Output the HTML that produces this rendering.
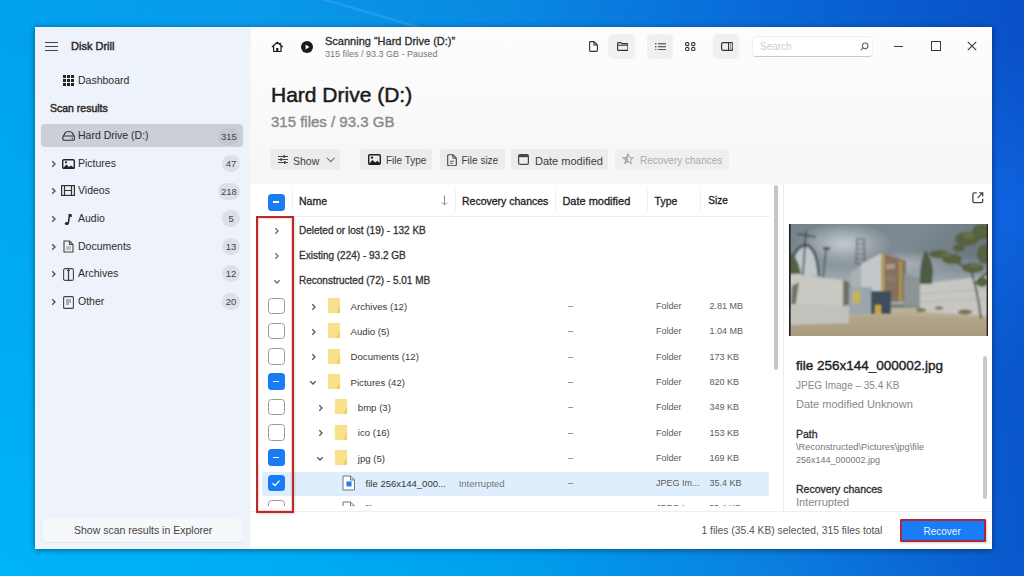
<!DOCTYPE html>
<html><head><meta charset="utf-8">
<style>
*{margin:0;padding:0;box-sizing:border-box}
html,body{width:1024px;height:576px;overflow:hidden}
body{position:relative;font-family:"Liberation Sans",sans-serif;background:linear-gradient(to right,#00a2ee 0%,#0a9aea 25%,#0a88e2 50%,#0a68d8 75%,#0a50c8 100%)}
#bg2{position:absolute;left:0;top:0;width:1024px;height:576px;background:linear-gradient(to right,#00b4f8 0%,#00aef5 25%,#00a0ee 50%,#0a80e0 75%,#0a58cc 100%);-webkit-mask-image:linear-gradient(to bottom,transparent,#000);mask-image:linear-gradient(to bottom,transparent,#000)}
.a{position:absolute;white-space:nowrap;line-height:1}
#win{position:absolute;left:35px;top:27px;width:957px;height:522px;background:#fafafa;overflow:hidden;box-shadow:0 1px 6px rgba(0,0,0,.45)}
#side{position:absolute;left:0;top:0;width:216px;height:522px;background:#eef2fa;border-right:1px solid #f5f7fb}
.s{color:#2b2b2b}
.badge{position:absolute;height:17.5px;border-radius:9px;background:#dde0e7;color:#444;font-size:9.5px;line-height:17.5px;text-align:center}
.chev{position:absolute;width:4.6px;height:4.6px;border-right:1.5px solid #555;border-bottom:1.5px solid #555;transform:rotate(-45deg)}
.chevd{position:absolute;width:5px;height:5px;border-right:1.4px solid #555;border-bottom:1.4px solid #555;transform:rotate(45deg)}
.btn{position:absolute;background:#ececec;border-radius:3px}
.cb{position:absolute;width:16.5px;height:16.5px;border:1px solid #9a9a9a;border-radius:3.5px;background:#fff}
.cbb{position:absolute;width:16.5px;height:16.5px;border-radius:3.5px;background:#1a7cf5}
.cbb:after{content:"";position:absolute;left:5px;top:7.3px;width:6px;height:1.3px;background:#fff}
.nm:after{display:none}
.fold{position:absolute;width:12px;height:15px;background:#f9e08a;border-radius:1px;box-shadow:0 0 1px rgba(230,190,80,.6)}
.fold:after{content:"";position:absolute;right:0;bottom:0;width:3px;height:7px;background:#ecc95e;clip-path:polygon(100% 0,100% 100%,0 100%)}
.r{color:#404040;font-size:9.5px}
.sb{-webkit-text-stroke:0.3px currentColor}
.g{color:#777;font-size:9px}
</style></head><body>
<div id="bg2"></div>
<div style="position:absolute;left:0;top:0;width:1024px;height:576px;background:radial-gradient(ellipse 70px 170px at 1010px 210px,rgba(20,110,240,.55),rgba(20,110,240,0))"></div>
<svg style="position:absolute;left:0;top:0" width="1024" height="40"><path d="M322 -1 L418 27" stroke="rgba(255,255,255,.1)" stroke-width="2.5"/></svg>
<div id="win">
  <div id="side">
    <!-- hamburger -->
    <div class="a" style="left:10px;top:15px;width:13px;height:1.3px;background:#444"></div>
    <div class="a" style="left:10px;top:19px;width:13px;height:1.3px;background:#444"></div>
    <div class="a" style="left:10px;top:23px;width:13px;height:1.3px;background:#444"></div>
    <div class="a s sb" style="left:36px;top:13.5px;font-size:11px;-webkit-text-stroke-width:0.45px">Disk Drill</div>
    <!-- dashboard icon -->
    <svg class="a" style="left:28px;top:48px" width="11" height="11" viewBox="0 0 11 11"><g fill="#222"><rect x="0" y="0" width="3" height="3"/><rect x="4" y="0" width="3" height="3"/><rect x="8" y="0" width="3" height="3"/><rect x="0" y="4" width="3" height="3"/><rect x="4" y="4" width="3" height="3"/><rect x="8" y="4" width="3" height="3"/><rect x="0" y="8" width="3" height="3"/><rect x="4" y="8" width="3" height="3"/><rect x="8" y="8" width="3" height="3"/></g></svg>
    <div class="a s" style="left:43px;top:48px;font-size:10.5px">Dashboard</div>
    <div class="a s sb" style="left:15px;top:76.3px;font-size:10.5px;-webkit-text-stroke-width:0.45px">Scan results</div>
    <!-- selected row -->
    <div class="a" style="left:6px;top:97px;width:202px;height:23px;background:#cbcfd7;border-radius:4px"></div>
    <svg class="a" style="left:26.5px;top:104.2px" width="13.5" height="10" viewBox="0 0 13.5 10"><path d="M1.2 5.2 L3.2 1.9 Q3.8 0.7 5 0.7 H8.5 Q9.7 0.7 10.3 1.9 L12.3 5.2" fill="none" stroke="#333" stroke-width="1.1"/><rect x="0.7" y="5" width="12.1" height="4.3" rx="2" fill="none" stroke="#333" stroke-width="1.1"/><circle cx="10.3" cy="7.15" r="0.75" fill="#333"/></svg>
    <div class="a s" style="left:43px;top:103px;font-size:10.5px">Hard Drive (D:)</div>
    <div class="badge" style="left:183.2px;top:100.7px;width:21.6px;background:#c2c6ce">315</div>
    <!-- categories -->
    <svg class="a" style="left:15.8px;top:132.7px" width="5" height="8" viewBox="0 0 5 8"><path d="M1.2 1.2 L4 4 L1.2 6.8" fill="none" stroke="#555" stroke-width="1.4"/></svg>
    <svg class="a" style="left:26.7px;top:131.8px" width="13" height="10.2" viewBox="0 0 13 10.2"><rect x="0.7" y="0.7" width="11.6" height="8.8" rx="1.3" fill="none" stroke="#222" stroke-width="1.4"/><path d="M0.8 9.4 L4.3 5.6 L7 8 L9 6.4 L12.2 9 V9.5 H0.8 Z" fill="#222"/><circle cx="4" cy="3.3" r="1.1" fill="#222"/></svg>
    <div class="a s" style="left:43px;top:131px;font-size:10.5px">Pictures</div>
    <div class="badge" style="left:187.4px;top:127.7px;width:17.4px">47</div>

    <svg class="a" style="left:15.8px;top:159.7px" width="5" height="8" viewBox="0 0 5 8"><path d="M1.2 1.2 L4 4 L1.2 6.8" fill="none" stroke="#555" stroke-width="1.4"/></svg>
    <svg class="a" style="left:26px;top:158px" width="14" height="11" viewBox="0 0 14 11"><rect x="0.6" y="0.6" width="12.8" height="9.8" fill="none" stroke="#333" stroke-width="1.2"/><path d="M3.5 0.6 V10.4 M10.5 0.6 V10.4 M3.5 5.5 H10.5" stroke="#333" stroke-width="1.2"/></svg>
    <div class="a s" style="left:43px;top:158px;font-size:10.5px">Videos</div>
    <div class="badge" style="left:183.2px;top:155.7px;width:21.6px">218</div>

    <svg class="a" style="left:15.8px;top:187.7px" width="5" height="8" viewBox="0 0 5 8"><path d="M1.2 1.2 L4 4 L1.2 6.8" fill="none" stroke="#555" stroke-width="1.4"/></svg>
    <svg class="a" style="left:29px;top:187px" width="8" height="12" viewBox="0 0 8 12"><path d="M4.5 1 Q6 0.5 7 1 L7 2.2 Q6 2 5.3 2.2 L4.3 9.5" fill="none" stroke="#222" stroke-width="1.5"/><ellipse cx="2.8" cy="9.5" rx="2" ry="1.6" fill="#222"/></svg>
    <div class="a s" style="left:43px;top:186px;font-size:10.5px">Audio</div>
    <div class="badge" style="left:187.4px;top:182.7px;width:17.4px">5</div>

    <svg class="a" style="left:15.8px;top:215.7px" width="5" height="8" viewBox="0 0 5 8"><path d="M1.2 1.2 L4 4 L1.2 6.8" fill="none" stroke="#555" stroke-width="1.4"/></svg>
    <svg class="a" style="left:28px;top:213px" width="11" height="13" viewBox="0 0 11 13"><path d="M1 1 H6.5 L10 4.5 V12 H1 Z M6.5 1 V4.5 H10" fill="none" stroke="#444" stroke-width="1.1"/><path d="M3 7 H8 M3 9 H8" stroke="#777" stroke-width="0.8"/></svg>
    <div class="a s" style="left:43px;top:214px;font-size:10.5px">Documents</div>
    <div class="badge" style="left:187.4px;top:210.7px;width:17.4px">13</div>

    <svg class="a" style="left:15.8px;top:242.7px" width="5" height="8" viewBox="0 0 5 8"><path d="M1.2 1.2 L4 4 L1.2 6.8" fill="none" stroke="#555" stroke-width="1.4"/></svg>
    <svg class="a" style="left:28px;top:241px" width="11" height="13" viewBox="0 0 11 13"><rect x="0.6" y="0.6" width="9.8" height="11.8" rx="1.5" fill="none" stroke="#444" stroke-width="1.1"/><path d="M5.5 1 V12" stroke="#444" stroke-width="1.3"/><path d="M4 3 L5.5 1.5 L7 3" fill="none" stroke="#444" stroke-width="1"/></svg>
    <div class="a s" style="left:43px;top:241px;font-size:10.5px">Archives</div>
    <div class="badge" style="left:187.4px;top:237.7px;width:17.4px">12</div>

    <svg class="a" style="left:15.8px;top:270.7px" width="5" height="8" viewBox="0 0 5 8"><path d="M1.2 1.2 L4 4 L1.2 6.8" fill="none" stroke="#555" stroke-width="1.4"/></svg>
    <svg class="a" style="left:28px;top:269px" width="11" height="13" viewBox="0 0 11 13"><rect x="0.6" y="0.6" width="9.8" height="11.8" rx="1" fill="none" stroke="#444" stroke-width="1.1"/><path d="M3 4 H8 M3 6 H8 M3 8 H6" stroke="#555" stroke-width="0.9"/></svg>
    <div class="a s" style="left:43px;top:269px;font-size:10.5px">Other</div>
    <div class="badge" style="left:187.4px;top:265.7px;width:17.4px">20</div>

    <!-- bottom button -->
    <div class="a" style="left:8px;top:492px;width:199px;height:23px;background:#f6f8fb;border-radius:4px;box-shadow:0 1px 1px rgba(0,0,0,.06)"></div>
    <div class="a" style="left:39px;top:498px;font-size:10.5px;color:#444">Show scan results in Explorer</div>
  </div>
  <!-- MAIN -->
  </div>

<div id="mainwrap">
  <!-- top bg -->
  <div class="a" style="left:251px;top:27px;width:741px;height:156.5px;background:linear-gradient(to bottom,#fdfdfd,#f9f9f9 60%,#f6f6f6)"></div>
  <!-- table bg -->
  <div class="a" style="left:251px;top:183.5px;width:532px;height:327.5px;background:#fff"></div>
  <!-- preview bg -->
  <div class="a" style="left:783px;top:183.5px;width:209px;height:327.5px;background:#fff;border-left:1px solid #ececec"></div>
  <!-- footer -->
  <div class="a" style="left:251px;top:511px;width:741px;height:38px;background:#fff;border-top:1px solid #efefef"></div>

  <!-- home icon -->
  <svg class="a" style="left:271px;top:41px" width="13" height="12" viewBox="0 0 13 12"><path d="M0.9 6 L6.3 1.2 L11.7 6 M2.6 4.6 V10.5 H10 V4.6 M9.3 3.6 V1.8" fill="none" stroke="#1a1a1a" stroke-width="1.2" stroke-linejoin="round"/><rect x="5.2" y="7" width="2.2" height="3.5" fill="#1a1a1a"/></svg>
  <!-- play icon -->
  <svg class="a" style="left:301px;top:41px" width="12" height="12" viewBox="0 0 12 12"><circle cx="6" cy="6" r="6" fill="#1a1a1a"/><path d="M4.6 3.6 L8.4 6 L4.6 8.4 Z" fill="#fff"/></svg>
  <div class="a" style="left:325px;top:36px;font-size:11px;color:#2b2b2b;-webkit-text-stroke:0.3px #2b2b2b">Scanning “Hard Drive (D:)”</div>
  <div class="a" style="left:325px;top:50.3px;font-size:9px;color:#777">315 files / 93.3 GB - Paused</div>

  <!-- toolbar icons -->
  <svg class="a" style="left:589px;top:41px" width="9" height="11" viewBox="0 0 9 11"><path d="M0.6 1.4 Q0.6 0.6 1.4 0.6 H5 L8.4 4 V9.6 Q8.4 10.4 7.6 10.4 H1.4 Q0.6 10.4 0.6 9.6 Z M5 0.6 V4 H8.4" fill="none" stroke="#333" stroke-width="1.1" stroke-linejoin="round"/></svg>
  <div class="btn" style="left:608px;top:34px;width:27px;height:25px;background:#f0f0f0;border-radius:5px"></div>
  <svg class="a" style="left:616.5px;top:42px" width="11.5" height="9" viewBox="0 0 11.5 9"><path d="M0.6 1.3 Q0.6 0.6 1.3 0.6 H4 L5 1.6 H10.2 Q10.9 1.6 10.9 2.3 V7.7 Q10.9 8.4 10.2 8.4 H1.3 Q0.6 8.4 0.6 7.7 Z M0.6 3.2 H10.9" fill="none" stroke="#333" stroke-width="1.1" stroke-linejoin="round"/></svg>
  <div class="btn" style="left:647px;top:34px;width:26px;height:25px;background:#f0f0f0;border-radius:5px"></div>
  <svg class="a" style="left:654.5px;top:42.5px" width="11" height="7.5" viewBox="0 0 11 7.5"><g fill="#333"><circle cx="0.8" cy="0.8" r="0.75"/><circle cx="0.8" cy="3.75" r="0.75"/><circle cx="0.8" cy="6.7" r="0.75"/><rect x="3" y="0.3" width="8" height="1"/><rect x="3" y="3.25" width="8" height="1"/><rect x="3" y="6.2" width="8" height="1"/></g></svg>
  <svg class="a" style="left:684.5px;top:42px" width="11" height="9" viewBox="0 0 11 9"><g fill="none" stroke="#333" stroke-width="1.05"><rect x="0.6" y="0.6" width="3.3" height="3" rx="1"/><rect x="6.6" y="0.6" width="3.3" height="3" rx="1"/><rect x="0.6" y="5.4" width="3.3" height="3" rx="1"/><rect x="6.6" y="5.4" width="3.3" height="3" rx="1"/></g></svg>
  <div class="btn" style="left:713px;top:34px;width:26px;height:25px;background:#f0f0f0;border-radius:5px"></div>
  <svg class="a" style="left:720.5px;top:41.8px" width="12.5" height="9" viewBox="0 0 12.5 9"><rect x="0.6" y="0.6" width="11.3" height="7.8" rx="1.6" fill="none" stroke="#333" stroke-width="1.2"/><rect x="7" y="1" width="1.1" height="7" fill="#333"/><rect x="9.2" y="2.2" width="1.2" height="1.6" fill="#555"/><rect x="9.2" y="4.6" width="1.2" height="2.4" fill="#777"/></svg>
  <!-- search -->
  <div class="a" style="left:752px;top:36px;width:121px;height:21px;background:#fff;border-radius:4px;border:1px solid #f1f1f1;border-bottom:1px solid #c9c9c9"></div>
  <div class="a" style="left:760px;top:42px;font-size:10px;color:#cdcdcd">Search</div>
  <svg class="a" style="left:860px;top:42px" width="9" height="9" viewBox="0 0 9 9"><circle cx="5.2" cy="3.8" r="2.8" fill="none" stroke="#666" stroke-width="1.1"/><path d="M3.2 5.8 L0.8 8.2" stroke="#666" stroke-width="1.2"/></svg>
  <!-- window controls -->
  <div class="a" style="left:894.3px;top:46px;width:8.5px;height:1.1px;background:#3a3a3a"></div>
  <div class="a" style="left:931px;top:41.3px;width:9.5px;height:9.5px;border:1.1px solid #3a3a3a"></div>
  <svg class="a" style="left:967px;top:41px" width="10" height="10" viewBox="0 0 10 10"><path d="M0.8 0.8 L9.2 9.2 M9.2 0.8 L0.8 9.2" stroke="#3a3a3a" stroke-width="1.1"/></svg>

  <!-- title -->
  <div class="a" style="left:271px;top:83.5px;font-size:21px;color:#1b1b1b;-webkit-text-stroke:0.5px #1b1b1b">Hard Drive (D:)</div>
  <div class="a" style="left:271px;top:114.3px;font-size:15px;color:#8a8a8a;-webkit-text-stroke:0.4px #8a8a8a">315 files / 93.3 GB</div>

  <!-- filter buttons -->
  <div class="btn" style="left:270px;top:149px;width:70px;height:21px"></div>
  <svg class="a" style="left:278px;top:155px" width="10" height="9" viewBox="0 0 10 9"><g stroke="#444" stroke-width="1"><path d="M0 1.5 H10 M0 4.5 H10 M0 7.5 H10"/></g><g fill="#444"><rect x="5.5" y="0" width="1.4" height="3"/><rect x="2.5" y="3" width="1.4" height="3"/><rect x="6" y="6" width="1.4" height="3"/></g></svg>
  <div class="a" style="left:293px;top:155.5px;font-size:10.5px;color:#3c3c3c">Show</div>
  <div class="chevd" style="left:328px;top:155px;width:5.5px;height:5.5px"></div>
  <div class="btn" style="left:360px;top:149px;width:72px;height:21px"></div>
  <svg class="a" style="left:368px;top:154px" width="13" height="11" viewBox="0 0 13 11"><rect x="0.7" y="0.7" width="11.6" height="9.6" rx="1.2" fill="none" stroke="#1e1e1e" stroke-width="1.4"/><path d="M0.8 10.3 L4.5 6 L7.3 8.6 L9.3 6.8 L12.2 9.6 V10.3 Z" fill="#1e1e1e"/><circle cx="4" cy="3.6" r="1.2" fill="#1e1e1e"/></svg>
  <div class="a" style="left:386px;top:155.5px;font-size:10px;color:#3c3c3c">File Type</div>
  <div class="btn" style="left:440px;top:149px;width:65px;height:21px"></div>
  <svg class="a" style="left:447px;top:153.5px" width="10" height="12.5" viewBox="0 0 10 12.5"><path d="M1.8 0.7 H6 L9.3 4 V10.6 Q9.3 11.8 8.1 11.8 H1.8 Q0.7 11.8 0.7 10.6 V1.9 Q0.7 0.7 1.8 0.7 Z M5.8 0.8 V3 Q5.8 4.2 7 4.2 H9.2" fill="none" stroke="#444" stroke-width="1.1"/><path d="M3 7.2 H7 M3 9.2 H6" stroke="#555" stroke-width="0.9"/></svg>
  <div class="a" style="left:461.5px;top:155.5px;font-size:10px;color:#3c3c3c">File size</div>
  <div class="btn" style="left:511px;top:149px;width:97px;height:21px"></div>
  <svg class="a" style="left:518px;top:154px" width="11" height="11" viewBox="0 0 11 11"><rect x="0.6" y="0.6" width="9.8" height="9.8" rx="1.5" fill="none" stroke="#444" stroke-width="1.2"/><rect x="1" y="1" width="9" height="2.2" fill="#444"/></svg>
  <div class="a" style="left:535px;top:155.5px;font-size:11px;color:#3c3c3c">Date modified</div>
  <div class="btn" style="left:615px;top:149px;width:114px;height:21px;background:#efefef"></div>
  <svg class="a" style="left:622px;top:153px" width="12" height="12" viewBox="0 0 12 12"><path d="M6 0.8 L7.5 4.3 L11.2 4.5 L8.3 6.9 L9.3 10.6 L6 8.5 L2.7 10.6 L3.7 6.9 L0.8 4.5 L4.5 4.3 Z" fill="none" stroke="#aaa" stroke-width="1.1" stroke-linejoin="round"/><path d="M6 0.8 L6 8.5 L2.7 10.6 L3.7 6.9 L0.8 4.5 L4.5 4.3 Z" fill="#aaa"/></svg>
  <div class="a" style="left:640px;top:155.5px;font-size:10px;color:#aaa">Recovery chances</div>
</div>
<div class="cbb" style="left:268px;top:194px"></div>
<div class="a" style="left:291.5px;top:189px;width:1px;height:23px;background:#f2f2f2"></div>
<div class="a" style="left:454.5px;top:189px;width:1px;height:23px;background:#f2f2f2"></div>
<div class="a" style="left:554.5px;top:189px;width:1px;height:23px;background:#f2f2f2"></div>
<div class="a" style="left:646.5px;top:189px;width:1px;height:23px;background:#f2f2f2"></div>
<div class="a" style="left:699.5px;top:189px;width:1px;height:23px;background:#f2f2f2"></div>
<div class="a" style="left:262px;top:216px;width:508px;height:1px;background:#ededed"></div>
<div class="a" style="left:299px;top:195.87px;font-size:10.5px;color:#222;-webkit-text-stroke:0.3px currentColor;">Name</div>
<svg class="a" style="left:441px;top:195px" width="7" height="11" viewBox="0 0 7 11"><path d="M3.5 0.5 V10 M0.8 7.3 L3.5 10 L6.2 7.3" fill="none" stroke="#888" stroke-width="1"/></svg>
<div class="a" style="left:462px;top:195.87px;font-size:10.5px;color:#222;-webkit-text-stroke:0.3px currentColor;">Recovery chances</div>
<div class="a" style="left:562.4px;top:195.63px;font-size:11px;color:#222;-webkit-text-stroke:0.3px currentColor;">Date modified</div>
<div class="a" style="left:654.6px;top:195.87px;font-size:10.5px;color:#222;-webkit-text-stroke:0.3px currentColor;">Type</div>
<div class="a" style="left:708.3px;top:196.12px;font-size:10px;color:#222;-webkit-text-stroke:0.3px currentColor;">Size</div>
<div class="a" style="left:262px;top:471.6px;width:507px;height:24px;background:#dfeefc;border-radius:3px"></div>
<svg class="a" style="left:274.2px;top:226.6px" width="5" height="8" viewBox="0 0 5 8"><path d="M1.3 1.3 L4 4 L1.3 6.7" fill="none" stroke="#6a6a6a" stroke-width="1.3"/></svg>
<div class="a" style="left:299px;top:225.72px;font-size:10px;color:#333;-webkit-text-stroke:0.3px currentColor;">Deleted or lost (19) - 132 KB</div>
<svg class="a" style="left:274.2px;top:251.9px" width="5" height="8" viewBox="0 0 5 8"><path d="M1.3 1.3 L4 4 L1.3 6.7" fill="none" stroke="#6a6a6a" stroke-width="1.3"/></svg>
<div class="a" style="left:299px;top:251.02px;font-size:10px;color:#333;-webkit-text-stroke:0.3px currentColor;">Existing (224) - 93.2 GB</div>
<svg class="a" style="left:272.5px;top:278.7px" width="8" height="5" viewBox="0 0 8 5"><path d="M1.3 1.3 L4 4 L6.7 1.3" fill="none" stroke="#6a6a6a" stroke-width="1.3"/></svg>
<div class="a" style="left:299px;top:276.31px;font-size:10px;color:#333;-webkit-text-stroke:0.3px currentColor;">Reconstructed (72) - 5.01 MB</div>
<div class="cb" style="left:268px;top:297.5px"></div>
<svg class="a" style="left:310.5px;top:302.5px" width="5" height="8" viewBox="0 0 5 8"><path d="M1.3 1.3 L4 4 L1.3 6.7" fill="none" stroke="#555" stroke-width="1.3"/></svg>
<div class="fold" style="left:327.5px;top:298.0px"></div>
<div class="a" style="left:350.6px;top:301.81px;font-size:9.6px;color:#383838;">Archives (12)</div>
<div class="a" style="left:568px;top:302.10px;font-size:9px;color:#666;">–</div>
<div class="a" style="left:656px;top:302.10px;font-size:9px;color:#5c5c5c;">Folder</div>
<div class="a" style="left:709.5px;top:302.10px;font-size:9px;color:#5c5c5c;">2.81 MB</div>
<div class="cb" style="left:268px;top:322.8px"></div>
<svg class="a" style="left:310.5px;top:327.8px" width="5" height="8" viewBox="0 0 5 8"><path d="M1.3 1.3 L4 4 L1.3 6.7" fill="none" stroke="#555" stroke-width="1.3"/></svg>
<div class="fold" style="left:327.5px;top:323.3px"></div>
<div class="a" style="left:350.6px;top:327.11px;font-size:9.6px;color:#383838;">Audio (5)</div>
<div class="a" style="left:568px;top:327.40px;font-size:9px;color:#666;">–</div>
<div class="a" style="left:656px;top:327.40px;font-size:9px;color:#5c5c5c;">Folder</div>
<div class="a" style="left:709.5px;top:327.40px;font-size:9px;color:#5c5c5c;">1.04 MB</div>
<div class="cb" style="left:268px;top:348.1px"></div>
<svg class="a" style="left:310.5px;top:353.1px" width="5" height="8" viewBox="0 0 5 8"><path d="M1.3 1.3 L4 4 L1.3 6.7" fill="none" stroke="#555" stroke-width="1.3"/></svg>
<div class="fold" style="left:327.5px;top:348.6px"></div>
<div class="a" style="left:350.6px;top:352.41px;font-size:9.6px;color:#383838;">Documents (12)</div>
<div class="a" style="left:568px;top:352.70px;font-size:9px;color:#666;">–</div>
<div class="a" style="left:656px;top:352.70px;font-size:9px;color:#5c5c5c;">Folder</div>
<div class="a" style="left:709.5px;top:352.70px;font-size:9px;color:#5c5c5c;">173 KB</div>
<div class="cbb" style="left:268px;top:373.4px"></div>
<svg class="a" style="left:309.0px;top:379.9px" width="8" height="5" viewBox="0 0 8 5"><path d="M1.3 1.3 L4 4 L6.7 1.3" fill="none" stroke="#555" stroke-width="1.3"/></svg>
<div class="fold" style="left:327.5px;top:373.9px"></div>
<div class="a" style="left:350.6px;top:377.71px;font-size:9.6px;color:#383838;">Pictures (42)</div>
<div class="a" style="left:568px;top:378.00px;font-size:9px;color:#666;">–</div>
<div class="a" style="left:656px;top:378.00px;font-size:9px;color:#5c5c5c;">Folder</div>
<div class="a" style="left:709.5px;top:378.00px;font-size:9px;color:#5c5c5c;">820 KB</div>
<div class="cb" style="left:268px;top:398.7px"></div>
<svg class="a" style="left:317.7px;top:403.7px" width="5" height="8" viewBox="0 0 5 8"><path d="M1.3 1.3 L4 4 L1.3 6.7" fill="none" stroke="#555" stroke-width="1.3"/></svg>
<div class="fold" style="left:334.7px;top:399.2px"></div>
<div class="a" style="left:357.8px;top:403.01px;font-size:9.6px;color:#383838;">bmp (3)</div>
<div class="a" style="left:568px;top:403.30px;font-size:9px;color:#666;">–</div>
<div class="a" style="left:656px;top:403.30px;font-size:9px;color:#5c5c5c;">Folder</div>
<div class="a" style="left:709.5px;top:403.30px;font-size:9px;color:#5c5c5c;">349 KB</div>
<div class="cb" style="left:268px;top:424.0px"></div>
<svg class="a" style="left:317.7px;top:429.0px" width="5" height="8" viewBox="0 0 5 8"><path d="M1.3 1.3 L4 4 L1.3 6.7" fill="none" stroke="#555" stroke-width="1.3"/></svg>
<div class="fold" style="left:334.7px;top:424.5px"></div>
<div class="a" style="left:357.8px;top:428.31px;font-size:9.6px;color:#383838;">ico (16)</div>
<div class="a" style="left:568px;top:428.60px;font-size:9px;color:#666;">–</div>
<div class="a" style="left:656px;top:428.60px;font-size:9px;color:#5c5c5c;">Folder</div>
<div class="a" style="left:709.5px;top:428.60px;font-size:9px;color:#5c5c5c;">153 KB</div>
<div class="cbb" style="left:268px;top:449.3px"></div>
<svg class="a" style="left:316.2px;top:455.8px" width="8" height="5" viewBox="0 0 8 5"><path d="M1.3 1.3 L4 4 L6.7 1.3" fill="none" stroke="#555" stroke-width="1.3"/></svg>
<div class="fold" style="left:334.7px;top:449.8px"></div>
<div class="a" style="left:357.8px;top:453.61px;font-size:9.6px;color:#383838;">jpg (5)</div>
<div class="a" style="left:568px;top:453.90px;font-size:9px;color:#666;">–</div>
<div class="a" style="left:656px;top:453.90px;font-size:9px;color:#5c5c5c;">Folder</div>
<div class="a" style="left:709.5px;top:453.90px;font-size:9px;color:#5c5c5c;">169 KB</div>
<div class="cbb nm" style="left:268px;top:474.6px"><svg width="16" height="16" viewBox="0 0 16 16" style="position:absolute;left:0;top:0"><path d="M4.5 8.3 L7 10.6 L11.5 5.6" fill="none" stroke="#fff" stroke-width="1.3"/></svg></div>
<svg class="a" style="left:342px;top:474.8px" width="14" height="16" viewBox="0 0 14 16"><path d="M1 1 H8.5 L12.5 5 V15 H1 Z M8.5 1 V5 H12.5" fill="#fff" stroke="#777" stroke-width="1"/><rect x="4.4" y="6.3" width="5.2" height="5.2" rx="1.3" fill="#2a7fe0" stroke="#8cc0f0" stroke-width="0.6"/></svg>
<div class="a" style="left:365.6px;top:478.96px;font-size:9.5px;color:#333;">file 256x144_000...</div>
<div class="a" style="left:458.7px;top:479.36px;font-size:9.5px;color:#777;">Interrupted</div>
<div class="a" style="left:568px;top:479.20px;font-size:9px;color:#666;">–</div>
<div class="a" style="left:656px;top:479.20px;font-size:9px;color:#5c5c5c;">JPEG Im...</div>
<div class="a" style="left:709.5px;top:479.20px;font-size:9px;color:#5c5c5c;">35.4 KB</div>
<div class="a" style="left:252px;top:496.9px;width:531px;height:9.1px;overflow:hidden"><div class="cb" style="left:16px;top:3px"></div><svg class="a" style="left:90px;top:4px" width="14" height="16" viewBox="0 0 14 16"><path d="M1 1 H8.5 L12.5 5 V15 H1 Z M8.5 1 V5 H12.5" fill="#fff" stroke="#777" stroke-width="1"/></svg><div class="a" style="left:113px;top:7px;font-size:9.5px;color:#444">file</div><div class="a" style="left:404px;top:7px;font-size:9px;color:#666">JPEG Im...</div><div class="a" style="left:457px;top:7px;font-size:9px;color:#666">35.4 KB</div></div>
<div class="a" style="left:773.5px;top:185px;width:4.5px;height:185px;background:#c6c6c6;border-radius:2px"></div>
<div class="a" style="left:256.3px;top:215.7px;width:37.5px;height:297.1px;border:2px solid #bb2a2a;box-shadow:inset 0 0 1px 1px rgba(255,120,120,.35), 1px 1px 2px rgba(0,0,0,.15)"></div>
<svg class="a" style="left:971.5px;top:192px" width="12" height="11.5" viewBox="0 0 12 11.5"><path d="M4.8 0.9 H2.3 Q0.9 0.9 0.9 2.3 V9.2 Q0.9 10.6 2.3 10.6 H9.3 Q10.7 10.6 10.7 9.2 V6.8 M5.6 5.9 L10.6 0.9 M7.2 0.9 H10.7 V4.4" fill="none" stroke="#444" stroke-width="1.3"/></svg>
<svg class="a" style="left:788.5px;top:223.7px" width="199" height="112" viewBox="0 0 199 112">
<defs>
<linearGradient id="sky" x1="0" y1="0" x2="1" y2="0.6"><stop offset="0" stop-color="#76838a"/><stop offset="0.5" stop-color="#7e8a92"/><stop offset="1" stop-color="#5f6b72"/></linearGradient>
<linearGradient id="gnd" x1="0" y1="0" x2="0" y2="1"><stop offset="0" stop-color="#bfb39a"/><stop offset="1" stop-color="#a3967a"/></linearGradient>
<radialGradient id="glow" cx="0.5" cy="0.5" r="0.5"><stop offset="0" stop-color="#d2d9dc" stop-opacity=".85"/><stop offset="1" stop-color="#d2d9dc" stop-opacity="0"/></radialGradient>
<linearGradient id="hz" x1="0" y1="0" x2="0" y2="1"><stop offset="0" stop-color="#a8b3b8" stop-opacity="0"/><stop offset="1" stop-color="#a8b3b8" stop-opacity=".9"/></linearGradient>
<filter id="bl" x="-5%" y="-5%" width="110%" height="110%"><feGaussianBlur stdDeviation="0.8"/></filter>
<clipPath id="cp"><rect width="199" height="112"/></clipPath>
</defs>
<g clip-path="url(#cp)"><g filter="url(#bl)">
<rect x="-3" y="-3" width="205" height="118" fill="url(#sky)"/>
<ellipse cx="55" cy="20" rx="48" ry="22" fill="url(#glow)"/>
<ellipse cx="120" cy="40" rx="40" ry="14" fill="url(#glow)" opacity=".6"/>
<rect x="-3" y="30" width="205" height="30" fill="url(#hz)"/>
<path d="M-3 86 L199 82 V115 H-3 Z" fill="url(#gnd)"/>
<path d="M-3 98 Q80 88 199 96 V115 H-3 Z" fill="#ad9f82" opacity=".5"/>
<!-- left arch building -->
<path d="M1 52 Q3 22 17 21 Q28 23 30 52 Z" fill="#bfc7ca"/>
<path d="M1 52 Q3 22 17 21 Q28 23 30 52" fill="none" stroke="#4c575c" stroke-width="2.8"/>
<path d="M-1 28 Q8 30 12 50 H-1 Z" fill="#56613f"/>
<path d="M17 7 L13 62" stroke="#3c3c3c" stroke-width="1.5"/>
<path d="M8 10 L27 13" stroke="#474747" stroke-width="1.3"/>
<path d="M37 26 L31 82" stroke="#3c3c3c" stroke-width="1.3"/>
<rect x="34" y="23" width="7" height="3" fill="#555"/>
<!-- left wall -->
<path d="M1 50 L54 56 V82 L1 84 Z" fill="#c9c8c3"/>
<path d="M3 62 L10 58 L5 92 L1 92 Z" fill="#5b5e4c" opacity=".8"/>
<path d="M1 80 L60 81 V99 L1 101 Z" fill="#c2c1bb"/>
<path d="M54 56 L60 58 V81 L54 82 Z" fill="#6e7266"/>
<!-- tower -->
<path d="M68 15 H75 L76 40 H67 Z" fill="none" stroke="#5e6266" stroke-width="1.2"/>
<path d="M68 20 H75 M67.5 25 H75.5 M67.5 30 H75.5 M67 35 H76" stroke="#5e6266" stroke-width="0.9"/>
<!-- center building -->
<path d="M62 48 L90 30 L117 38 V80 H62 Z" fill="#a9b1b5"/>
<path d="M72 40 L93 29 V70 H72 Z" fill="#c2c8ca"/>
<path d="M93 29 L117 37 V78 H93 Z" fill="#86705e"/>
<rect x="92" y="30" width="3.5" height="46" fill="#b5a052"/>
<rect x="110" y="37" width="3" height="41" fill="#a8964e"/>
<rect x="97" y="40" width="9" height="5" fill="#b0948a"/>
<rect x="97" y="52" width="9" height="6" fill="#8a7a70"/>
<path d="M115 50 L132 54 V82 H115 Z" fill="#8e9495"/>
<!-- containers -->
<rect x="60" y="63" width="23" height="27" fill="#9aa5ad"/>
<rect x="64" y="67" width="7" height="12" fill="#c9b548"/>
<rect x="82" y="67" width="20" height="23" fill="#3e4d5b"/>
<rect x="86" y="81" width="6" height="9" fill="#c4a640"/>
<!-- right white wall -->
<path d="M131 60 L199 52 V92 L131 88 Z" fill="#c6c6c2"/>
<path d="M131 70 L199 65" stroke="#b0b0ac" stroke-width="1"/>
<path d="M131 78 L199 75" stroke="#b6b6b2" stroke-width="1"/>
<!-- cypress -->
<path d="M131 60 Q130 42 136 26 Q142 32 144 46 L143 60 Z" fill="#4f5b45"/>
<!-- pine -->
<path d="M192 95 Q188 62 180 40 M182 48 Q166 34 145 30 M186 60 Q194 52 199 48" fill="none" stroke="#4a4c3c" stroke-width="1.8"/>
<g fill="#56623f">
<ellipse cx="150" cy="30" rx="10" ry="4"/>
<ellipse cx="163" cy="35" rx="10" ry="5"/>
<ellipse cx="178" cy="15" rx="12" ry="7"/>
<ellipse cx="192" cy="8" rx="9" ry="8"/>
<ellipse cx="184" cy="44" rx="11" ry="5"/>
<ellipse cx="195" cy="30" rx="7" ry="10"/>
<ellipse cx="170" cy="24" rx="6" ry="4"/>
<ellipse cx="193" cy="58" rx="6" ry="5"/>
</g>
<g fill="#6b7550" opacity=".8">
<ellipse cx="158" cy="31" rx="5" ry="2"/>
<ellipse cx="180" cy="12" rx="6" ry="3"/>
<ellipse cx="186" cy="42" rx="5" ry="2"/>
</g>
<ellipse cx="176" cy="88" rx="7" ry="2.4" fill="#746e56"/>
<ellipse cx="150" cy="84" rx="4" ry="1.8" fill="#7a745c"/>
<ellipse cx="132" cy="86" rx="5" ry="2" fill="#7a745c"/>
</g></g>
<rect x="0" y="0" width="1.6" height="112" fill="#1e1e1e"/>
<rect x="197.6" y="0" width="1.4" height="112" fill="#2a2a2a"/>
</svg>
<div class="a" style="left:796px;top:358.5px;font-size:13.5px;color:#1e1e1e;-webkit-text-stroke:0.4px #1e1e1e">file 256x144_000002.jpg</div>
<div class="a" style="left:796px;top:381.3px;font-size:10px;color:#888">JPEG Image – 35.4 KB</div>
<div class="a" style="left:796px;top:398.5px;font-size:11px;color:#888">Date modified Unknown</div>
<div class="a" style="left:796px;top:429.1px;font-size:10.5px;color:#2b2b2b;-webkit-text-stroke:0.3px #2b2b2b">Path</div>
<div class="a" style="left:796px;top:443px;font-size:9.3px;color:#777">\Reconstructed\Pictures\jpg\file</div>
<div class="a" style="left:796px;top:455.5px;font-size:9px;color:#777">256x144_000002.jpg</div>
<div class="a" style="left:796px;top:483.9px;font-size:10.5px;color:#2b2b2b;-webkit-text-stroke:0.3px #2b2b2b">Recovery chances</div>
<div class="a" style="left:796px;top:497px;font-size:11px;color:#888">Interrupted</div>
<div class="a" style="left:983px;top:355.5px;width:4px;height:143px;background:#c9c9c9;border-radius:2px"></div>
<!-- footer -->
<div class="a" style="left:701.5px;top:526.3px;font-size:10.3px;color:#555">1 files (35.4 KB) selected, 315 files total</div>
<div class="a" style="left:900px;top:518.5px;width:85.5px;height:23.5px;background:#1a7cf6;border:2px solid #a8283c;border-radius:1px;box-shadow:1px 1px 2px rgba(0,0,0,.2)"></div>
<div class="a" style="left:923.5px;top:526.6px;font-size:10px;color:#e8f3ff">Recover</div>

</body></html>
